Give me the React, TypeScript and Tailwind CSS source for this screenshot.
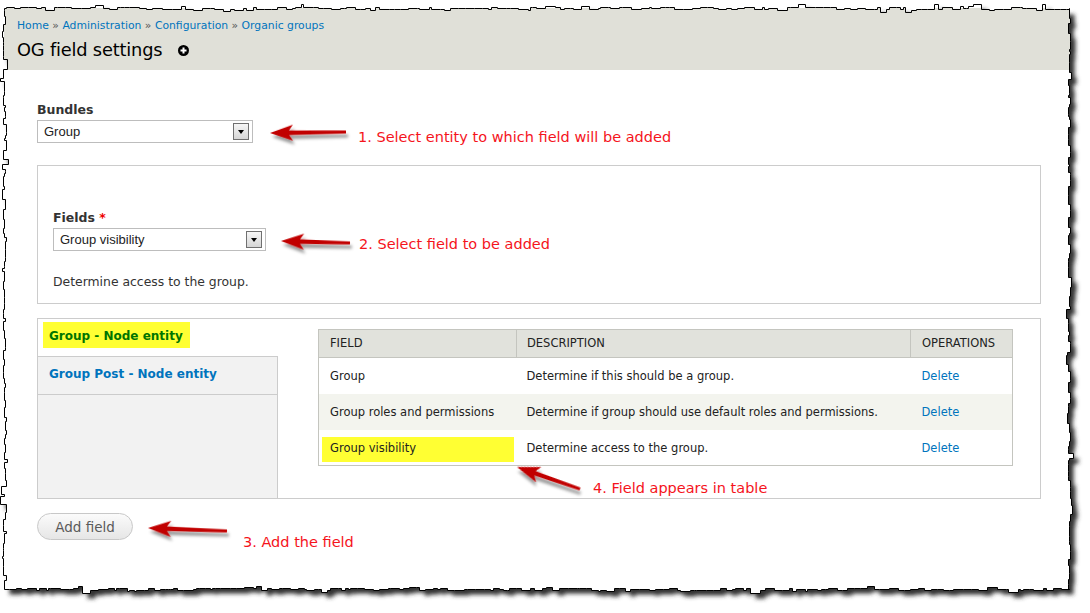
import type { ReactNode } from 'react'

// small seeded random so the torn edge is the same on every render
function rng(seed: number) {
  let a = seed
  return () => {
    a |= 0
    a = (a + 0x6d2b79f5) | 0
    let t = Math.imul(a ^ (a >>> 15), 1 | a)
    t = (t + Math.imul(t ^ (t >>> 7), 61 | t)) ^ t
    return ((t ^ (t >>> 14)) >>> 0) / 4294967296
  }
}

function tornPath(L: number, T: number, R: number, B: number, seed: number) {
  const r = rng(seed)
  const step = () => 2 + Math.floor(r() * 9)
  const off = () => Math.round((r() * 2 - 1) * 1.6 + (r() < 0.07 ? (r() < 0.5 ? -3 : 3) : 0))
  let x = L
  let y = T
  let d = `M${L + 0.5} ${T + 0.5}`
  while (x < R) {
    x = Math.min(R, x + step())
    d += `H${x + 0.5}`
    y = x >= R ? T : T + off()
    d += `V${y + 0.5}`
  }
  while (y < B) {
    y = Math.min(B, y + step())
    d += `V${y + 0.5}`
    x = y >= B ? R : R + off()
    d += `H${x + 0.5}`
  }
  while (x > L) {
    x = Math.max(L, x - step())
    d += `H${x + 0.5}`
    y = x <= L ? B : B + off()
    d += `V${y + 0.5}`
  }
  while (y > T) {
    y = Math.max(T, y - step())
    d += `V${y + 0.5}`
    x = y <= T ? L : L + off()
    d += `H${x + 0.5}`
  }
  return d + 'Z'
}

const FRAME = tornPath(4, 8, 1069, 589, 7)
const OUTSIDE = `M0 0H1090V613H0Z ${FRAME}`

function TornFrame() {
  return (
    <svg className="pointer-events-none absolute inset-0" width="1090" height="613" viewBox="0 0 1090 613">
      <defs>
        <filter id="edgeBlur" x="-5%" y="-5%" width="110%" height="110%">
          <feGaussianBlur stdDeviation="2.2" />
        </filter>
        <clipPath id="outside">
          <path d={OUTSIDE} clipRule="evenodd" />
        </clipPath>
      </defs>
      <path d={OUTSIDE} fill="#fff" fillRule="evenodd" />
      <g clipPath="url(#outside)">
        <path d={FRAME} transform="translate(5 5)" fill="#333" filter="url(#edgeBlur)" />
      </g>
      <path d={FRAME} fill="none" stroke="#000" strokeWidth="1" />
    </svg>
  )
}

type ArrowProps = { tip: [number, number]; tail: [number, number] }

function Arrow({ tip, tail }: ArrowProps) {
  const dx = tail[0] - tip[0]
  const dy = tail[1] - tip[1]
  const len = Math.hypot(dx, dy)
  const angle = (Math.atan2(dy, dx) * 180) / Math.PI
  const d = `M0 0 L23 -8 L19 -2.2 L${len} -1.4 L${len} 1.4 L19 2.2 L23 8 Z`
  return <path d={d} transform={`translate(${tip[0]} ${tip[1]}) rotate(${angle})`} fill="#c10000" filter="url(#arrowShadow)" />
}

function Annotations() {
  const note = "absolute whitespace-nowrap text-[14.5px] leading-[17px] text-[#f5141c]"
  return (
    <div className="pointer-events-none absolute inset-0">
      <svg className="absolute inset-0" width="1090" height="613" viewBox="0 0 1090 613">
        <defs>
          <filter id="arrowShadow" x="-20%" y="-100%" width="140%" height="300%">
            <feDropShadow dx="2" dy="4" stdDeviation="1.8" floodColor="#000" floodOpacity="0.4" />
          </filter>
        </defs>
        <Arrow tip={[270, 133]} tail={[346, 132]} />
        <Arrow tip={[281, 241]} tail={[350, 243]} />
        <Arrow tip={[148, 528]} tail={[227, 531]} />
        <Arrow tip={[517, 467]} tail={[580, 489]} />
      </svg>
      <span className={`${note} left-[358px] top-[129px]`}>1. Select entity to which field will be added</span>
      <span className={`${note} left-[359px] top-[236px]`}>2. Select field to be added</span>
      <span className={`${note} left-[243px] top-[534px]`}>3. Add the field</span>
      <span className={`${note} left-[593px] top-[480px]`}>4. Field appears in table</span>
    </div>
  )
}

function FakeSelect({ value, className }: { value: string; className: string }) {
  return (
    <div className={`flex h-[23px] items-center justify-between border border-[#bdbdbd] bg-white pl-[6px] pr-[3px] ${className}`}>
      <span className="font-['Liberation_Sans',Arial,sans-serif] text-[13px] text-[#222]">{value}</span>
      <span className="flex h-[17px] w-[16px] items-center justify-center border border-[#707070] bg-gradient-to-b from-[#f6f6f6] to-[#d6d6d6]">
        <span className="h-0 w-0 border-x-[3.5px] border-t-[4px] border-x-transparent border-t-black" />
      </span>
    </div>
  )
}

function Label({ children }: { children: ReactNode }) {
  return <div className="pt-[1px] text-[12.5px] font-bold leading-[16px] text-[#333]">{children}</div>
}

const rows = [
  { field: 'Group', desc: 'Determine if this should be a group.', stripe: false, mark: false },
  { field: 'Group roles and permissions', desc: 'Determine if group should use default roles and permissions.', stripe: true, mark: false },
  { field: 'Group visibility', desc: 'Determine access to the group.', stripe: false, mark: true },
]

function FieldTable() {
  return (
    <table className="w-[695px] table-fixed border-collapse border border-[#c4c5bf] text-[11.5px] text-[#222]">
      <thead>
        <tr className="h-[28px] bg-[#e1e2dc] text-left">
          <th className="w-[198px] border-b border-r border-[#c4c5bf] pl-[11px] pt-[1px] font-normal">FIELD</th>
          <th className="w-[394px] border-b border-r border-[#c4c5bf] pl-[10px] pt-[1px] font-normal">DESCRIPTION</th>
          <th className="border-b border-[#c4c5bf] pl-[11px] pt-[1px] font-normal">OPERATIONS</th>
        </tr>
      </thead>
      <tbody>
        {rows.map((row) => (
          <tr key={row.field} className={`h-[36px] ${row.stripe ? 'bg-[#f3f4ee]' : 'bg-white'}`}>
            <td className="relative pl-[11px] pt-[2px]">
              {row.mark ? <span className="absolute left-[3px] top-[7px] h-[25px] w-[192px] bg-[#ffff33]" /> : null}
              <span className="relative">{row.field}</span>
            </td>
            <td className="pl-[10px] pt-[2px]">{row.desc}</td>
            <td className="pl-[11px] pt-[2px]">
              <a className="text-[#0074bd]">Delete</a>
            </td>
          </tr>
        ))}
      </tbody>
    </table>
  )
}

export default function App() {
  return (
    <div className="relative h-[613px] w-[1090px] overflow-hidden bg-white font-['DejaVu_Sans',sans-serif] text-[#333]">
      <div className="ml-[4px] mt-[8px] h-[581px] w-[1066px] bg-white">
        <header className="h-[62px] bg-[#e0e0d8] pl-[13px] pt-[11px]">
          <nav className="text-[10.8px] leading-[14px] text-[#0074bd]">
            <a>Home</a> <span className="text-[#555]">»</span> <a>Administration</a>{' '}
            <span className="text-[#555]">»</span> <a>Configuration</a> <span className="text-[#555]">»</span>{' '}
            <a>Organic groups</a>
          </nav>
          <h1 className="mt-[6px] flex items-center text-[17.8px] font-normal leading-[22px] tracking-[-0.01em] text-black">
            OG field settings
            <svg className="ml-[16px]" width="11" height="11" viewBox="0 0 11 11">
              <circle cx="5.5" cy="5.5" r="5.5" fill="#000" />
              <path d="M5.5 2.5v6M2.5 5.5h6" stroke="#fff" strokeWidth="2" />
            </svg>
          </h1>
        </header>

        <main className="pl-[33px] pr-[29px] pt-[31px]">
          <Label>Bundles</Label>
          <FakeSelect value="Group" className="mt-[2px] w-[216px]" />

          <fieldset className="mt-[22px] border border-[#cccccc] pb-[13px] pl-[15px] pt-[43px]">
            <Label>
              Fields <span className="text-[#e00]">*</span>
            </Label>
            <FakeSelect value="Group visibility" className="mt-[2px] w-[213px]" />
            <p className="mt-[22px] pt-[1px] text-[12.4px] leading-[16px] text-[#333]">Determine access to the group.</p>
          </fieldset>

          <div className="mt-[14px] flex h-[181px] border border-[#cccccc]">
            <div className="flex w-[240px] flex-col">
              <div className="h-[37px] bg-white pl-[5px] pt-[3px]">
                <span className="inline-block h-[26px] bg-[#ffff33] pl-[6px] pr-[7px] text-[12px] font-bold leading-[28px] text-[#007400]">
                  Group - Node entity
                </span>
              </div>
              <div className="flex-1 border-r border-t border-[#cccccc] bg-[#f2f2f2]">
                <div className="h-[38px] border-b border-[#cccccc] pl-[11px] text-[12px] font-bold leading-[34px] text-[#0074bd]">
                  Group Post - Node entity
                </div>
              </div>
            </div>
            <div className="pl-[40px] pt-[10px]">
              <FieldTable />
            </div>
          </div>

          <button className="mt-[14px] h-[27px] w-[96px] rounded-full border border-[#c8c8c8] bg-gradient-to-b from-[#fbfbfb] to-[#e6e6e6] pt-[1px] text-[13.5px] text-[#5a5a5a]">
            Add field
          </button>
        </main>
      </div>
      <Annotations />
      <TornFrame />
    </div>
  )
}
